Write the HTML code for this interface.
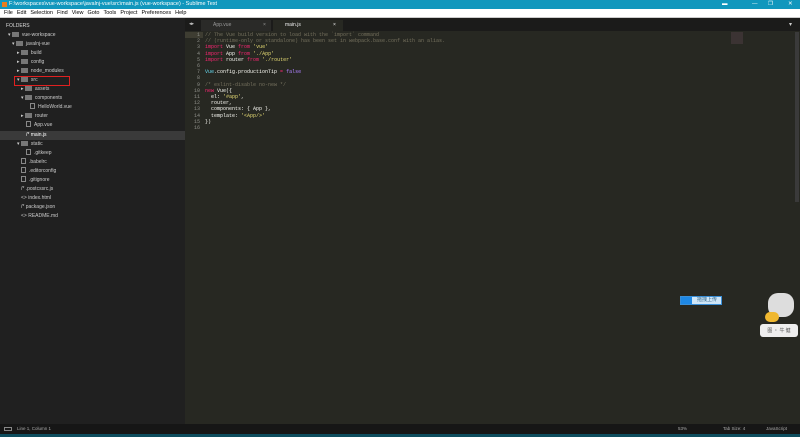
<!DOCTYPE html><html><head><style>
*{margin:0;padding:0;box-sizing:border-box}
body{width:800px;height:437px;overflow:hidden;background:#272822;font-family:"Liberation Sans",sans-serif;position:relative}
.a{position:absolute}
#title{left:0;top:0;width:800px;height:9px;background:#1197bd;color:#fff;font-size:5.5px;line-height:9px;padding-left:9px}
#menu{left:0;top:9px;width:800px;height:9px;background:#fff;font-size:5.5px;line-height:9px;color:#000;border-bottom:1px solid #ccc}
#menu span{margin-left:4px}
#side{left:0;top:18px;width:185px;height:406px;background:#202020;color:#ccc;font-size:5px}
.r{position:absolute;height:9px;line-height:9px;white-space:nowrap}
.fd{display:inline-block;width:7px;height:5px;background:#777;margin-right:3px;vertical-align:-1px}
.fi{display:inline-block;width:5px;height:6px;border:1px solid #888;margin-right:3px;vertical-align:-1px}
#tabs{left:185px;top:18px;width:615px;height:13px;background:#1b1b1a}
pre{font-family:"Liberation Mono",monospace;font-size:5px;line-height:6.2px;color:#f8f8f2}
.c{color:#75715e}.k{color:#f92672}.s{color:#e6db74}.p{color:#ae81ff}.v{color:#66d9ef}
#status{left:0;top:424px;width:800px;height:10px;background:#161616;color:#aaa;font-size:4.5px;line-height:10px}
#task{left:0;top:434px;width:800px;height:3px;background:#0d4d5e}
</style></head><body>
<div id="title" class="a"><span class="a" style="left:2px;top:2px;width:5px;height:5px;background:#e87d1e"></span>F:\workspaces\vue-workspace\javalnj-vue\src\main.js (vue-workspace) - Sublime Text<span class="a" style="left:722px">▬</span><span class="a" style="left:752px">—</span><span class="a" style="left:768px">❐</span><span class="a" style="left:788px">✕</span></div>
<div id="menu" class="a"><span>File</span><span>Edit</span><span>Selection</span><span>Find</span><span>View</span><span>Goto</span><span>Tools</span><span>Project</span><span>Preferences</span><span>Help</span></div>
<div id="side" class="a">
<div class="r" style="left:6px;top:4px;font-size:5px;color:#ddd">FOLDERS</div>
<div class="r" style="left:8px;top:13px">▾ <span class="fd"></span>vue-workspace</div>
<div class="r" style="left:12px;top:22px">▾ <span class="fd"></span>javalnj-vue</div>
<div class="r" style="left:17px;top:31px">▸ <span class="fd"></span>build</div>
<div class="r" style="left:17px;top:40px">▸ <span class="fd"></span>config</div>
<div class="r" style="left:17px;top:49px">▸ <span class="fd"></span>node_modules</div>
<div class="r" style="left:17px;top:58px">▾ <span class="fd"></span>src</div>
<div class="a" style="left:14px;top:58px;width:56px;height:10px;border:1px solid #e02020"></div>
<div class="r" style="left:21px;top:67px">▸ <span class="fd"></span>assets</div>
<div class="r" style="left:21px;top:76px">▾ <span class="fd"></span>components</div>
<div class="r" style="left:30px;top:85px"><span class="fi"></span>HelloWorld.vue</div>
<div class="r" style="left:21px;top:94px">▸ <span class="fd"></span>router</div>
<div class="r" style="left:26px;top:103px"><span class="fi"></span>App.vue</div>
<div class="a" style="left:0;top:113px;width:185px;height:9px;background:#3a3a3a"></div>
<div class="r" style="left:26px;top:113px;color:#fff">/* main.js</div>
<div class="r" style="left:17px;top:122px">▾ <span class="fd"></span>static</div>
<div class="r" style="left:26px;top:131px"><span class="fi"></span>.gitkeep</div>
<div class="r" style="left:21px;top:140px"><span class="fi"></span>.babelrc</div>
<div class="r" style="left:21px;top:149px"><span class="fi"></span>.editorconfig</div>
<div class="r" style="left:21px;top:158px"><span class="fi"></span>.gitignore</div>
<div class="r" style="left:21px;top:167px">/* .postcssrc.js</div>
<div class="r" style="left:21px;top:176px">&lt;&gt; index.html</div>
<div class="r" style="left:21px;top:185px">/* package.json</div>
<div class="r" style="left:21px;top:194px">&lt;&gt; README.md</div>
</div>
<div id="tabs" class="a">
<div class="a" style="left:4px;top:3px;color:#bbb;font-size:5px">◂▸</div>
<div class="a" style="left:16px;top:2px;width:70px;height:11px;background:#2a2a28;color:#999;font-size:5px;line-height:11px;padding-left:12px">App.vue<span class="a" style="left:62px">×</span></div>
<div class="a" style="left:88px;top:2px;width:70px;height:11px;background:#272822;color:#eee;font-size:5px;line-height:11px;padding-left:12px">main.js<span class="a" style="left:60px">×</span></div>
<div class="a" style="left:604px;top:3px;color:#ccc;font-size:6px">▾</div>
</div>
<div class="a" style="left:185px;top:32px;width:18px;height:6px;background:#3e3d32"></div>
<pre class="a" style="left:188px;top:32px;color:#8f908a;text-align:right;width:12px">1
2
3
4
5
6
7
8
9
10
11
12
13
14
15
16</pre>
<pre class="a" style="left:205px;top:32px"><span class="c">// The Vue build version to load with the `import` command</span>
<span class="c">// (runtime-only or standalone) has been set in webpack.base.conf with an alias.</span>
<span class="k">import</span> Vue <span class="k">from</span> <span class="s">'vue'</span>
<span class="k">import</span> App <span class="k">from</span> <span class="s">'./App'</span>
<span class="k">import</span> router <span class="k">from</span> <span class="s">'./router'</span>

<span class="v">Vue</span>.config.productionTip <span class="k">=</span> <span class="p">false</span>

<span class="c">/* eslint-disable no-new */</span>
<span class="k">new</span> Vue({
  el: <span class="s">'#app'</span>,
  router,
  components: { App },
  template: <span class="s">'&lt;App/&gt;'</span>
})
</pre>
<div class="a" style="left:731px;top:32px;width:12px;height:12px;background:#4a3a40;opacity:.6"></div>
<div class="a" style="left:795px;top:32px;width:4px;height:170px;background:#3a3a3a"></div>
<div class="a" style="left:680px;top:296px;width:42px;height:9px;background:#cfe6f8;border:1px solid #3a8fd8"><div class="a" style="left:0;top:0;width:11px;height:7px;background:#1e88e5"></div><span class="a" style="left:16px;top:0;font-size:5px;line-height:7px;color:#368">拖拽上传</span></div>
<div class="a" style="left:768px;top:293px;width:26px;height:24px;background:#ddd;border-radius:10px"></div>
<div class="a" style="left:765px;top:312px;width:14px;height:10px;background:#f0b830;border-radius:5px"></div>
<div class="a" style="left:760px;top:324px;width:38px;height:13px;background:#eee;border-radius:3px;font-size:5px;line-height:13px;text-align:center;color:#555;font-family:'Noto Sans CJK SC',sans-serif">图 · 牛 健</div>
<div id="status" class="a"><span class="a" style="left:4px;top:3px;width:8px;height:4px;border:1px solid #888"></span><span class="a" style="left:17px">Line 1, Column 1</span><span class="a" style="left:678px">53%</span><span class="a" style="left:723px">Tab Size: 4</span><span class="a" style="left:766px">JavaScript</span></div>
<div id="task" class="a"></div>
</body></html>
